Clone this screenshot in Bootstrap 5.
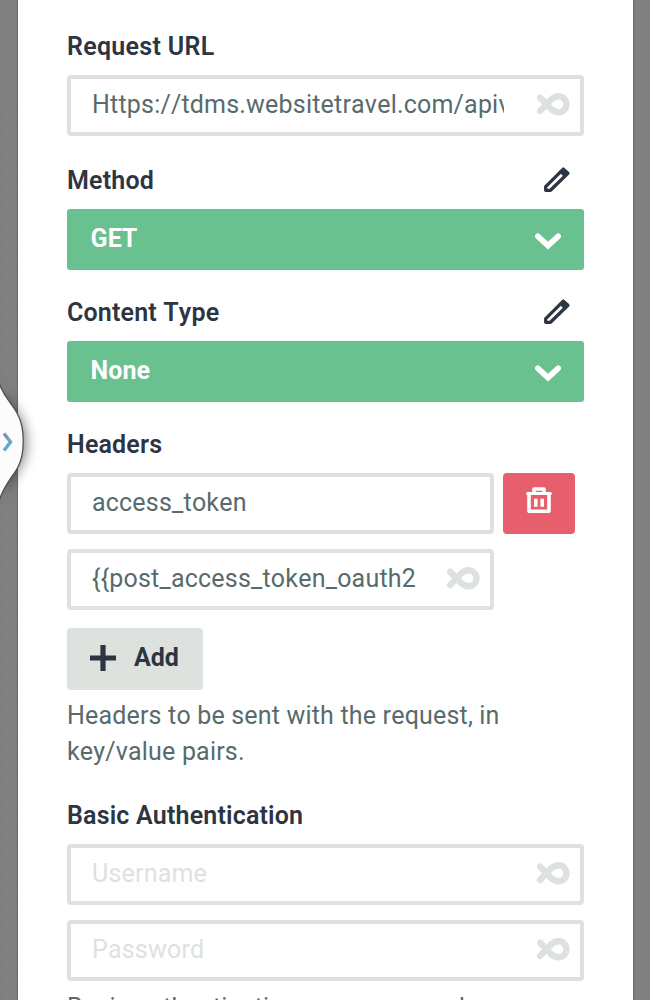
<!DOCTYPE html>
<html lang="en">
<head>
<meta charset="utf-8">
<meta name="viewport" content="width=device-width, initial-scale=1">
<title>Request settings</title>
<link rel="stylesheet" href="https://cdn.jsdelivr.net/npm/bootstrap@5.3.0/dist/css/bootstrap.min.css">
<style>
  :root { --ink:#2d3542; --body:#586b6c; --line:#dde2df; --green:#68c18f; --red:#e75f6c; }
  body { font-family: Roboto, "Liberation Sans", sans-serif; font-size: 25px; line-height: 36px; letter-spacing: .18px; font-kerning: none; color: var(--body);
    background: #808080; height: 1000px; overflow: hidden; }
  .backdrop-grid { left:0; top:98px; right:0; bottom:0; border-left: 2px solid #7b7f7f;
    background: repeating-linear-gradient(#808080 0 9px, #7c7f7f 9px 11px, #808080 11px 18px); }
  .panel { width: 615px; height: 1000px; margin-left: 18px; padding: 29px 49px 0; background:#fff; box-shadow: 0 0 2px #444; overflow: hidden; }
  .title-row { height: 46px; color: var(--ink); font-weight: 600; }
  .title-row svg { margin: 2px 12px 0 0; }
  .field { height: 61px; border: 4px solid var(--line); border-radius: 4px; background:#fff; padding: 0 10px 3px 21px; }
  .field input { border:0; outline:0; padding:2px 0 0; min-width:0; color: var(--body); background: transparent; letter-spacing: .2px; font-kerning: none; }
  .field input::placeholder { color: var(--line); opacity:1; }
  .field input.url { flex: 0 0 412px; }
  .field svg { fill: none; stroke: var(--line); stroke-width: 6.4; stroke-linecap: round; flex-shrink: 0; }
  .picker, .picker:hover { height: 61px; border-radius: 3px; background: var(--green); color:#fff; font: inherit; font-kerning: none; font-weight: 700; letter-spacing: .1px; padding: 0 22px 1px 23.5px; }
  .picker svg { margin-top: 4px; }
  .half { width: 427px; }
  .trash { width: 72px; height: 61px; border-radius: 4px; background: var(--red); padding: 0 0 8px; }
  .add { width: 136px; height: 62px; border-radius: 4px; background: var(--line); color: var(--ink); font: inherit; font-weight: 700; letter-spacing: 0; padding: 0 0 3px 23px; }
  .handle { left:0; top: 370px; }
</style>
</head>
<body class="position-relative">
<div class="backdrop-grid position-absolute"></div>
<main class="panel position-relative">
  <div class="title-row" style="letter-spacing:.3px">Request URL</div>
  <div class="field d-flex align-items-center justify-content-between">
    <input class="url" aria-label="Request URL" value="Https://tdms.websitetravel.com/apiv1">
    <svg width="34" height="24"><use href="#fish"/></svg>
  </div>

  <div class="title-row d-flex justify-content-between" style="margin-top:27px">Method
    <svg width="30" height="30"><use href="#pencil"/></svg></div>
  <button class="btn picker border-0 w-100 d-flex align-items-center justify-content-between">GET<svg width="28" height="18"><use href="#chev"/></svg></button>

  <div class="title-row d-flex justify-content-between" style="margin-top:25px">Content Type
    <svg width="30" height="30"><use href="#pencil"/></svg></div>
  <button class="btn picker border-0 w-100 d-flex align-items-center justify-content-between">None<svg width="28" height="18"><use href="#chev"/></svg></button>

  <div class="title-row" style="margin-top:25px">Headers</div>
  <div class="d-flex" style="gap:9px">
    <div class="field half d-flex align-items-center"><input class="w-100" aria-label="Key" value="access_token"></div>
    <button class="btn trash border-0 d-flex align-items-center justify-content-center" aria-label="Delete">
      <svg width="28" height="28" viewBox="0 0 28 28" fill="none" stroke="#fff" stroke-width="3.600"><path d="M4 7V25.300H24V7" stroke-linejoin="round"/><path d="M2.600 7.500H25.400" stroke-linecap="round" stroke-width="3"/><path d="M9 7V3H19V7" stroke-linejoin="round"/><path d="M10.800 12.800V20.800M17.200 12.800V20.800"/></svg>
    </button>
  </div>
  <div class="field half d-flex align-items-center justify-content-between" style="margin-top:15px">
    <input class="flex-grow-1" aria-label="Value" value="{{post_access_token_oauth2">
    <svg width="34" height="24"><use href="#fish"/></svg>
  </div>
  <button class="btn add border-0 d-flex align-items-center" style="margin-top:18px;gap:18px"><svg width="26" height="26" fill="none" stroke="#2d3542" stroke-width="5.200"><path d="M13 0V26M0 13H26"/></svg>Add</button>
  <div style="margin-top:8px">Headers to be sent with the request, in<br>key/value pairs.</div>

  <div class="title-row" style="margin-top:28px">Basic Authentication</div>
  <div class="field d-flex align-items-center justify-content-between"><input class="flex-grow-1" aria-label="Username" placeholder="Username">
    <svg width="34" height="24"><use href="#fish"/></svg></div>
  <div class="field d-flex align-items-center justify-content-between" style="margin-top:15px"><input class="flex-grow-1" aria-label="Password" placeholder="Password">
    <svg width="34" height="24"><use href="#fish"/></svg></div>
  <div style="margin-top:9px">Basic authentication username and</div>
</main>

<svg class="handle position-absolute" width="80" height="150" viewBox="0 370 80 150">
  <defs>
    <filter id="soft" x="-80%" y="-20%" width="300%" height="140%"><feGaussianBlur stdDeviation="7"/></filter>
    <linearGradient id="blue" x2="0" y2="1"><stop stop-color="#7f8f9a"/><stop offset=".4" stop-color="#6aa5c2"/><stop offset="1" stop-color="#55acd6"/></linearGradient>
    <path id="fish" d="M4.200 5.700L14.500 16.500C17 19 19 20.300 22.500 20.300A8 8 0 0 0 22.500 4.300C19 4.300 17 5.600 14.500 8.100L4.200 18.900"/>
    <g id="pencil" fill="none" stroke="#2d3542"><path d="M3.700 21.700L21.300 4.100L25.900 8.300L8.500 25.300H3.700Z" stroke-width="3.300" stroke-linejoin="round"/><path d="M16.500 6.500L21.300 3L27 8.300L23 13Z" fill="#2d3542" stroke="none"/></g>
    <path id="chev" d="M3.900 4.300L14 13.600L24.100 4.300" fill="none" stroke="#fff" stroke-width="5.700" stroke-linecap="round"/>
  </defs>
  <path d="M0 392C5 404 25 414 25 442S6 478 0 495Z" fill="#000810" opacity=".6" filter="url(#soft)"/>
  <path d="M-2 380C3 397 12 403 18 415C25 428 25 454 18 467C12 478 3 486 -2 504Z" fill="#fcfcfc" stroke="#505050" stroke-width="1.300"/>
  <path d="M4 433.500L10.500 442L4 450.500" fill="none" stroke="url(#blue)" stroke-width="3.400"/>
</svg>
<script src="https://cdn.jsdelivr.net/npm/bootstrap@5.3.0/dist/js/bootstrap.bundle.min.js"></script>
</body>
</html>
